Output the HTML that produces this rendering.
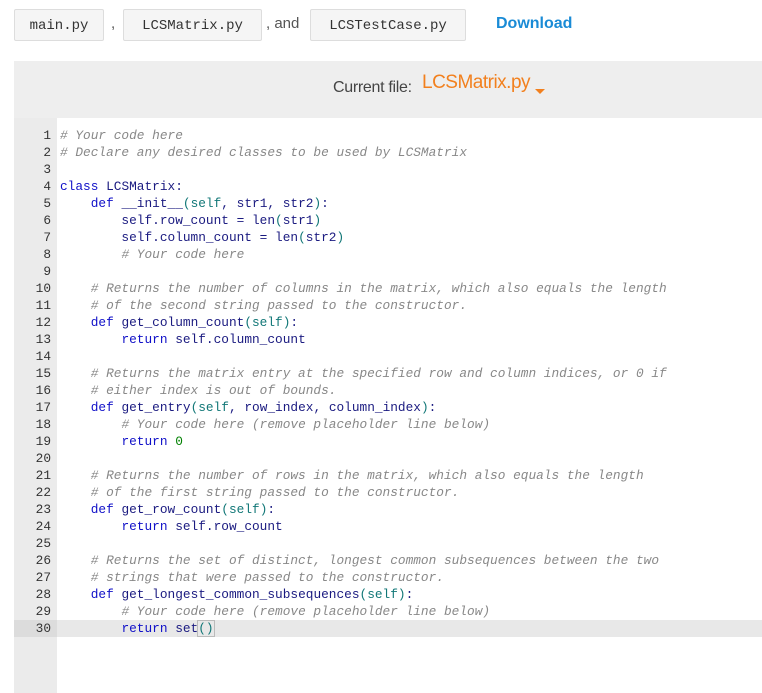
<!DOCTYPE html>
<html><head><meta charset="utf-8"><style>
body{margin:0;width:762px;height:693px;background:#fff;font-family:"Liberation Sans",sans-serif;position:relative;overflow:hidden}
.b{position:absolute;top:9px;height:32px;border:1px solid #ddd;background:#f5f5f5;border-radius:2px;font-family:"Liberation Mono",monospace;font-size:14px;color:#333;line-height:32px;text-align:center;box-sizing:border-box}
.t{position:absolute;top:15px;font-size:15px;color:#555}
.panel{position:absolute;left:14px;top:61px;width:748px;height:632px;background:#eeeeee}
.ed{position:absolute;left:57px;top:118px;width:705px;height:575px;background:#fff}
.gut{position:absolute;left:14px;top:118px;width:43px;height:575px;background:#ebebeb}
.code{position:absolute;left:14px;top:127px;width:748px;font-family:"Liberation Mono",monospace;font-size:12.8px;line-height:17px}
.l{height:17px;position:relative;white-space:pre}
.n{display:inline-block;width:37px;text-align:right;color:#333;margin-right:9px}
.c{color:#888;font-style:italic}.k{color:#1010c8}.f{color:#1a1a80}.p{color:#117777}.z{color:#008000}
.hl{background:#e8e8e8}.hl .n{background:#dcdcdc;width:37px;padding-right:6px;margin-right:3px}
</style></head><body>
<div class="b" style="left:14px;width:90px">main.py</div>
<div class="t" style="left:111px">,</div>
<div class="b" style="left:123px;width:139px">LCSMatrix.py</div>
<div class="t" style="left:266px">, and</div>
<div class="b" style="left:310px;width:156px">LCSTestCase.py</div>
<div class="t" style="left:496px;top:15px;color:#1a8bd6;font-weight:bold;font-size:16px">Download</div>
<div class="panel"></div>
<div style="position:absolute;left:333px;top:79px;font-size:16px;color:#444;letter-spacing:-0.3px">Current file:</div>
<div style="position:absolute;left:422px;top:72px;font-size:19px;color:#f2801e;letter-spacing:-0.5px">LCSMatrix.py</div>
<div style="position:absolute;left:535px;top:89px;border-left:5px solid transparent;border-right:5px solid transparent;border-top:5px solid #f2801e"></div>
<div class="gut"></div><div class="ed"></div>
<div class="code"><div class="l"><span class="n">1</span><span class="c"># Your code here</span></div><div class="l"><span class="n">2</span><span class="c"># Declare any desired classes to be used by LCSMatrix</span></div><div class="l"><span class="n">3</span></div><div class="l"><span class="n">4</span><span class="k">class</span> <span class="f">LCSMatrix:</span></div><div class="l"><span class="n">5</span>    <span class="k">def</span> <span class="f">__init__</span><span class="p">(self</span><span class="f">, str1, str2</span><span class="p">)</span><span class="f">:</span></div><div class="l"><span class="n">6</span><span class="f">        self.row_count = len</span><span class="p">(</span><span class="f">str1</span><span class="p">)</span></div><div class="l"><span class="n">7</span><span class="f">        self.column_count = len</span><span class="p">(</span><span class="f">str2</span><span class="p">)</span></div><div class="l"><span class="n">8</span>        <span class="c"># Your code here</span></div><div class="l"><span class="n">9</span></div><div class="l"><span class="n">10</span>    <span class="c"># Returns the number of columns in the matrix, which also equals the length</span></div><div class="l"><span class="n">11</span>    <span class="c"># of the second string passed to the constructor.</span></div><div class="l"><span class="n">12</span>    <span class="k">def</span> <span class="f">get_column_count</span><span class="p">(self)</span><span class="f">:</span></div><div class="l"><span class="n">13</span>        <span class="k">return</span> <span class="f">self.column_count</span></div><div class="l"><span class="n">14</span></div><div class="l"><span class="n">15</span>    <span class="c"># Returns the matrix entry at the specified row and column indices, or 0 if</span></div><div class="l"><span class="n">16</span>    <span class="c"># either index is out of bounds.</span></div><div class="l"><span class="n">17</span>    <span class="k">def</span> <span class="f">get_entry</span><span class="p">(self</span><span class="f">, row_index, column_index</span><span class="p">)</span><span class="f">:</span></div><div class="l"><span class="n">18</span>        <span class="c"># Your code here (remove placeholder line below)</span></div><div class="l"><span class="n">19</span>        <span class="k">return</span> <span class="z">0</span></div><div class="l"><span class="n">20</span></div><div class="l"><span class="n">21</span>    <span class="c"># Returns the number of rows in the matrix, which also equals the length</span></div><div class="l"><span class="n">22</span>    <span class="c"># of the first string passed to the constructor.</span></div><div class="l"><span class="n">23</span>    <span class="k">def</span> <span class="f">get_row_count</span><span class="p">(self)</span><span class="f">:</span></div><div class="l"><span class="n">24</span>        <span class="k">return</span> <span class="f">self.row_count</span></div><div class="l"><span class="n">25</span></div><div class="l"><span class="n">26</span>    <span class="c"># Returns the set of distinct, longest common subsequences between the two</span></div><div class="l"><span class="n">27</span>    <span class="c"># strings that were passed to the constructor.</span></div><div class="l"><span class="n">28</span>    <span class="k">def</span> <span class="f">get_longest_common_subsequences</span><span class="p">(self)</span><span class="f">:</span></div><div class="l"><span class="n">29</span>        <span class="c"># Your code here (remove placeholder line below)</span></div><div class="l hl"><span class="n">30</span>        <span class="k">return</span> <span class="f">set</span><span class="p" style="outline:1px solid #bbb">()</span></div></div>
</body></html>
